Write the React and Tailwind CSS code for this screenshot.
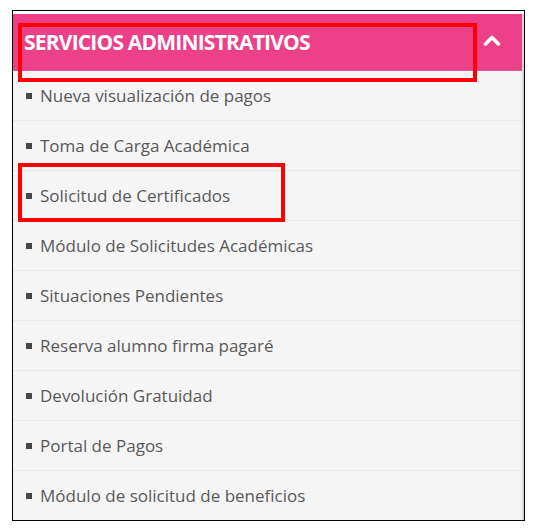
import React from "react";

const items = [
  "Nueva visualización de pagos",
  "Toma de Carga Académica",
  "Solicitud de Certificados",
  "Módulo de Solicitudes Académicas",
  "Situaciones Pendientes",
  "Reserva alumno firma pagaré",
  "Devolución Gratuidad",
  "Portal de Pagos",
  "Módulo de solicitud de beneficios",
];

export default function App() {
  return (
    <div
      className="relative w-[534px] h-[528px] bg-white overflow-hidden"
      style={{ fontFamily: '"Open Sans", "Noto Sans", sans-serif' }}
    >
      <div className="ml-[12px] mt-[10px] w-[513px] h-[511px] border border-black bg-white pt-[3px]">
        <div className="h-full border-r-2 border-[#d4d4d4] bg-[#f5f5f5]">
          <div className="h-[57px] bg-[#ec4088] border-b border-[#e7569a] flex items-center justify-between pl-[11px] pr-[21px]">
            <span className="text-white font-bold text-[21px] tracking-[-0.8px] leading-none">
              SERVICIOS ADMINISTRATIVOS
            </span>
            <svg width="18" height="12" viewBox="0 0 18 12" className="mt-[-4px]">
              <polyline
                points="2.5,10 9,3.5 15.5,10"
                fill="none"
                stroke="white"
                strokeWidth="3.6"
                strokeLinecap="round"
                strokeLinejoin="round"
              />
            </svg>
          </div>
          {items.map((t, i) => (
            <div
              key={t}
              className={`flex items-center pl-[13px] ${i > 0 ? "h-[50px] border-t border-[#e9e9e9]" : "h-[49px]"}`}
            >
              <span className="w-[6px] h-[6px] bg-[#474747] mr-[8px] mt-[1px]" />
              <span className="text-[17px] text-[#595959]">{t}</span>
            </div>
          ))}
        </div>
      </div>
      <div className="absolute left-[18px] top-[23px] w-[459px] h-[59px] border-4 border-[#ff0000]" />
      <div className="absolute left-[18px] top-[163px] w-[267px] h-[59px] border-4 border-[#ff0000]" />
    </div>
  );
}
